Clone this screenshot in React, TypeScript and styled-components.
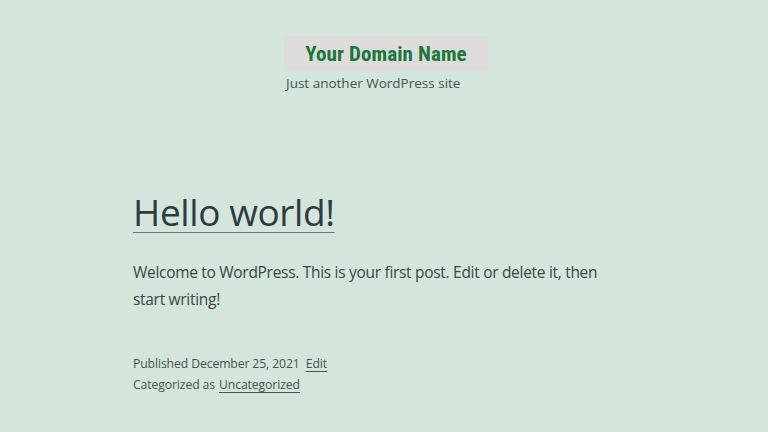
import React from 'react';
import styled, {createGlobalStyle} from 'styled-components';

const colors = {
  page: '#d4e6db',
  titleBox: '#dddcdb',
  titleText: '#18773a',
  heading: '#2e3b43',
  text: '#3b4744',
  muted: '#46524f',
};

const GlobalStyle = createGlobalStyle`
  html, body {
    margin: 0;
    padding: 0;
    background: ${colors.page};
  }
  body {
    font-family: "Open Sans", "Noto Sans", sans-serif;
    color: ${colors.text};
  }
`;

const Page = styled.div`
  width: 768px;
  height: 432px;
  overflow: hidden;
  background: ${colors.page};
`;

const Header = styled.header`
  display: flex;
  flex-direction: column;
  align-items: center;
  padding-top: 36px;
  padding-left: 4px;
`;

const Branding = styled.div`
  display: flex;
  flex-direction: column;
  align-items: flex-start;
`;

const SiteTitle = styled.a`
  display: block;
  width: 204px;
  height: 35px;
  line-height: 36px;
  text-align: center;
  background: ${colors.titleBox};
  color: ${colors.titleText};
  font-family: "Liberation Sans Narrow", "Roboto Condensed", "Roboto", sans-serif;
  font-weight: 700;
  font-size: 21px;
  letter-spacing: 0.1px;
  text-decoration: none;
`;

const Tagline = styled.p`
  margin: 2px 0 0 2px;
  font-size: 13.5px;
  line-height: 20px;
  color: ${colors.muted};
`;

const Main = styled.main`
  padding: 94px 0 0 133px;
`;

const Article = styled.article`
  width: 480px;
`;

const PostTitle = styled.h1`
  margin: 0;
  font-family: "Open Sans", sans-serif;
  font-weight: 400;
  font-size: 37px;
  line-height: 50px;
  letter-spacing: -0.4px;
  color: ${colors.heading};
  a {
    color: inherit;
    text-decoration: underline;
    text-decoration-thickness: 1px;
    text-underline-offset: 6px;
    text-decoration-color: #6b7a7c;
  }
`;

const Body = styled.p`
  margin: 22px 0 0;
  font-size: 15.5px;
  line-height: 27px;
  letter-spacing: -0.3px;
  color: ${colors.text};
`;

const Meta = styled.footer`
  margin-top: 40px;
  font-size: 12.2px;
  line-height: 21px;
  letter-spacing: -0.1px;
  color: ${colors.muted};
`;

const MetaLine = styled.div`
  display: flex;
  gap: ${(p: {$gap?: number}) => p.$gap ?? 4}px;
`;

const MetaLink = styled.a`
  color: inherit;
  text-decoration: underline;
  text-underline-offset: 3px;
  text-decoration-thickness: 1px;
`;

export default function App() {
  return (
    <Page>
      <GlobalStyle />
      <Header>
        <Branding>
          <SiteTitle href="#">Your Domain Name</SiteTitle>
          <Tagline>Just another WordPress site</Tagline>
        </Branding>
      </Header>
      <Main>
        <Article>
          <PostTitle>
            <a href="#">Hello world!</a>
          </PostTitle>
          <Body>Welcome to WordPress. This is your first post. Edit or delete it, then start writing!</Body>
          <Meta>
            <MetaLine $gap={6}>
              <span>Published December 25, 2021</span>
              <MetaLink href="#">Edit</MetaLink>
            </MetaLine>
            <MetaLine>
              <span>Categorized as</span>
              <MetaLink href="#">Uncategorized</MetaLink>
            </MetaLine>
          </Meta>
        </Article>
      </Main>
    </Page>
  );
}
